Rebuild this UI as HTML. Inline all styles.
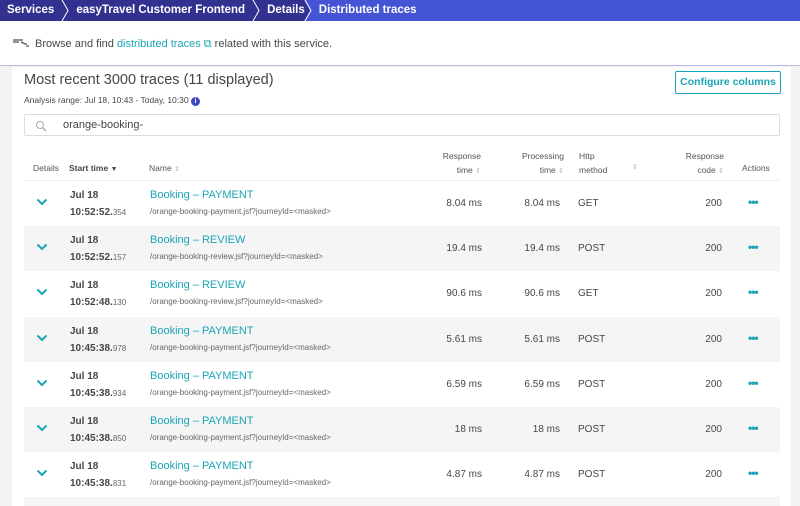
<!DOCTYPE html>
<html><head><meta charset="utf-8"><style>
*{margin:0;padding:0;box-sizing:border-box}
html,body{width:800px;height:506px;overflow:hidden}
body{background:#f2f2f2;font-family:"Liberation Sans",sans-serif;color:#454646;position:relative}
.bar{position:absolute;left:0;top:0;width:800px;height:21px;background:#4454d4;display:flex;font-size:11.5px;color:#fff;font-weight:bold}
.bar .dk{background:#33318f;height:21px;display:flex;align-items:center}
.seg{padding:0 7px;height:21px;line-height:21px;position:relative}
.sep{width:8px;height:21px}
.info{position:absolute;left:0;top:21px;width:800px;height:45px;background:#fff;border-bottom:1px solid #b6b9ea;font-size:11px;color:#454646}
.info span.t{position:absolute;left:35px;top:17px}
a{color:#1aa5b5;text-decoration:none}
.panel{position:absolute;left:12px;top:67px;width:779px;height:439px;background:#fff;overflow:hidden}
h1{position:absolute;left:12px;top:5px;font-size:14.5px;font-weight:normal;color:#454646}
.rng{position:absolute;left:12px;top:28px;font-size:8.5px;color:#454646}
.btn{position:absolute;left:663px;top:4px;width:106px;height:23px;border:1px solid #1aa5b5;border-radius:2px;color:#1aa5b5;font-size:10.5px;font-weight:bold;text-align:center;line-height:21px;white-space:nowrap}
.search{position:absolute;left:12px;top:47px;width:756px;height:22px;border:1px solid #ddd;border-radius:2px;font-size:11px;line-height:20px;padding-left:38px;color:#454646}
.hd{position:absolute;left:12px;top:74px;width:756px;height:40px;border-bottom:1px solid #eee;font-size:8.5px;color:#555}
.hd div{position:absolute}
.row{position:absolute;left:12px;width:756px;height:45px;font-size:10px;color:#454646}
.row.g{background:#f5f5f5}
.row div{position:absolute}
.chev{left:12px;top:17px}
.d1{left:46px;top:9px;font-weight:bold;font-size:10px}
.d2{left:46px;top:26px;font-weight:bold;font-size:10px}
.d2 small{font-weight:normal;font-size:8px;color:#666}
.nm{left:126px;top:8px;color:#1aa5b5;font-size:11px}
.url{left:126px;top:26px;font-size:8px;color:#666}
.rt{right:298px;top:17px}
.pt{right:220px;top:17px}
.hm{left:554px;top:17px}
.rc{right:58px;top:17px}
.dots{left:724px;top:14px;color:#1aa5b5;font-weight:bold;font-size:12px;letter-spacing:-1px}
.ar{color:#bbb;font-size:7px}
</style></head><body>
<div class="bar"><div class="dk"><div class="seg">Services</div><svg class="sep" viewBox="0 0 8 21"><path d="M1 0L7 10.5L1 21" stroke="#fff" fill="none" stroke-width="1"/></svg><div class="seg">easyTravel Customer Frontend</div><svg class="sep" viewBox="0 0 8 21"><path d="M1 0L7 10.5L1 21" stroke="#fff" fill="none" stroke-width="1"/></svg><div class="seg">Details</div></div><svg class="sep" viewBox="0 0 8 21" style="background:#4454d4;margin-left:-8px"><path d="M0 0L6 10.5L0 21Z" fill="#33318f"/><path d="M1 0L7 10.5L1 21" stroke="#fff" fill="none"/></svg><div class="seg">Distributed traces</div></div>
<div class="info"><svg style="position:absolute;left:13px;top:18px" width="17" height="8" viewBox="0 0 17 8"><path d="M0 1H10M0 3H6M8 3L12 5H14M13 7H16" stroke="#555" stroke-width="1.3" fill="none"/></svg><span class="t">Browse and find <a>distributed traces ⧉</a> related with this service.</span></div>
<div class="panel">
<h1>Most recent 3000 traces (11 displayed)</h1>
<div class="rng">Analysis range: Jul 18, 10:43 - Today, 10:30 <span style="display:inline-block;width:9px;height:9px;border-radius:50%;background:#3b48c4;color:#fff;font-size:7px;text-align:center;line-height:9px;font-weight:bold">i</span></div>
<div class="btn">Configure columns</div>
<div class="search"><svg style="position:absolute;left:10px;top:5px" width="12" height="12" viewBox="0 0 12 12"><circle cx="5" cy="5" r="3.5" stroke="#aaa" fill="none"/><path d="M7.5 7.5L11 11" stroke="#aaa" stroke-width="1.3"/></svg>orange-booking-</div>
<div class="hd">
<div style="left:9px;top:22px">Details</div>
<div style="left:45px;top:22px;font-weight:bold;color:#454646">Start time <span style="font-size:7px">▼</span></div>
<div style="left:125px;top:22px">Name <span class="ar">⇕</span></div>
<div style="left:397px;top:8px;text-align:right;line-height:14px;width:60px">Response<br>time <span class="ar">⇕</span></div>
<div style="left:470px;top:8px;text-align:right;line-height:14px;width:70px">Processing<br>time <span class="ar">⇕</span></div>
<div style="left:555px;top:8px;line-height:14px">Http<br>method</div>
<div style="left:608px;top:22px" class="ar">⇕</div>
<div style="left:630px;top:8px;text-align:right;line-height:14px;width:70px">Response<br>code <span class="ar">⇕</span></div>
<div style="left:718px;top:22px">Actions</div>
</div>
<div id="rows"></div>
</div>
<script>
var d=[["10:52:52","354","PAYMENT","payment","8.04 ms","GET"],["10:52:52","157","REVIEW","review","19.4 ms","POST"],["10:52:48","130","REVIEW","review","90.6 ms","GET"],["10:45:38","978","PAYMENT","payment","5.61 ms","POST"],["10:45:38","934","PAYMENT","payment","6.59 ms","POST"],["10:45:38","850","PAYMENT","payment","18 ms","POST"],["10:45:38","831","PAYMENT","payment","4.87 ms","POST"],["","","","","",""]];
var h="";d.forEach(function(r,i){var top=114+i*45.2;h+='<div class="row'+(i%2?' g':'')+'" style="top:'+top+'px">'+(r[0]?'<div class="chev"><svg width="12" height="8" viewBox="0 0 12 8"><path d="M1.5 1.5L6 6L10.5 1.5" stroke="#1aa5b5" stroke-width="2" fill="none"/></svg></div><div class="d1">Jul 18</div><div class="d2">'+r[0]+'.<small>'+r[1]+'</small></div><div class="nm">Booking – '+r[2]+'</div><div class="url">/orange-booking-'+r[3]+'.jsf?journeyId=&lt;masked&gt;</div><div class="rt">'+r[4]+'</div><div class="pt">'+r[4]+'</div><div class="hm">'+r[5]+'</div><div class="rc">200</div><div class="dots">•••</div>':'')+'</div>';});
document.getElementById("rows").innerHTML=h;
</script>
</body></html>
